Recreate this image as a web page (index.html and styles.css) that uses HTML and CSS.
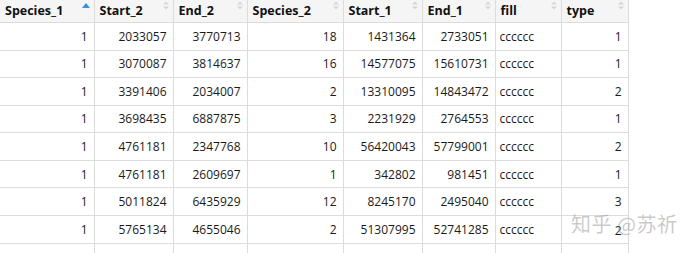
FILE: index.html
```html
<!DOCTYPE html>
<html>
<head>
<meta charset="utf-8">
<link rel="stylesheet" href="styles.css">
</head>
<body>
<div class="viewer">
<table class="grid">
<colgroup>
<col class="c1"><col class="c2"><col class="c3"><col class="c4"><col class="c5"><col class="c6"><col class="c7"><col class="c8">
</colgroup>
<thead>
<tr>
<th><span class="label">Species_1</span><span class="sort active"><svg width="8" height="5" viewBox="0 0 8 5"><path d="M0 5 L4 0 L8 5 Z" fill="#3d8fdb"/></svg></span></th>
<th><span class="label">Start_2</span><span class="sort"><svg width="6" height="9" viewBox="0 0 6 9"><path d="M0 3.5 L3 0.5 L6 3.5 Z M0 5.5 L3 8.5 L6 5.5 Z" fill="#d6d6d6"/></svg></span></th>
<th><span class="label">End_2</span><span class="sort"><svg width="6" height="9" viewBox="0 0 6 9"><path d="M0 3.5 L3 0.5 L6 3.5 Z M0 5.5 L3 8.5 L6 5.5 Z" fill="#d6d6d6"/></svg></span></th>
<th><span class="label">Species_2</span><span class="sort"><svg width="6" height="9" viewBox="0 0 6 9"><path d="M0 3.5 L3 0.5 L6 3.5 Z M0 5.5 L3 8.5 L6 5.5 Z" fill="#d6d6d6"/></svg></span></th>
<th><span class="label">Start_1</span><span class="sort"><svg width="6" height="9" viewBox="0 0 6 9"><path d="M0 3.5 L3 0.5 L6 3.5 Z M0 5.5 L3 8.5 L6 5.5 Z" fill="#d6d6d6"/></svg></span></th>
<th><span class="label">End_1</span><span class="sort"><svg width="6" height="9" viewBox="0 0 6 9"><path d="M0 3.5 L3 0.5 L6 3.5 Z M0 5.5 L3 8.5 L6 5.5 Z" fill="#d6d6d6"/></svg></span></th>
<th><span class="label">fill</span><span class="sort"><svg width="6" height="9" viewBox="0 0 6 9"><path d="M0 3.5 L3 0.5 L6 3.5 Z M0 5.5 L3 8.5 L6 5.5 Z" fill="#d6d6d6"/></svg></span></th>
<th><span class="label">type</span><span class="sort"><svg width="6" height="9" viewBox="0 0 6 9"><path d="M0 3.5 L3 0.5 L6 3.5 Z M0 5.5 L3 8.5 L6 5.5 Z" fill="#d6d6d6"/></svg></span></th>
</tr>
</thead>
<tbody>
<tr><td>1</td><td>2033057</td><td>3770713</td><td>18</td><td>1431364</td><td>2733051</td><td class="txt">cccccc</td><td>1</td></tr>
<tr><td>1</td><td>3070087</td><td>3814637</td><td>16</td><td>14577075</td><td>15610731</td><td class="txt">cccccc</td><td>1</td></tr>
<tr><td>1</td><td>3391406</td><td>2034007</td><td>2</td><td>13310095</td><td>14843472</td><td class="txt">cccccc</td><td>2</td></tr>
<tr><td>1</td><td>3698435</td><td>6887875</td><td>3</td><td>2231929</td><td>2764553</td><td class="txt">cccccc</td><td>1</td></tr>
<tr><td>1</td><td>4761181</td><td>2347768</td><td>10</td><td>56420043</td><td>57799001</td><td class="txt">cccccc</td><td>2</td></tr>
<tr><td>1</td><td>4761181</td><td>2609697</td><td>1</td><td>342802</td><td>981451</td><td class="txt">cccccc</td><td>1</td></tr>
<tr><td>1</td><td>5011824</td><td>6435929</td><td>12</td><td>8245170</td><td>2495040</td><td class="txt">cccccc</td><td>3</td></tr>
<tr><td>1</td><td>5765134</td><td>4655046</td><td>2</td><td>51307995</td><td>52741285</td><td class="txt">cccccc</td><td class="sub">2</td></tr>
<tr class="partial"><td></td><td></td><td></td><td></td><td></td><td></td><td></td><td></td></tr>
</tbody>
</table>
<div class="watermark">知乎 @苏祈</div>
</div>
</body>
</html>
```
FILE: styles.css
```css
html, body {
  margin: 0;
  padding: 0;
  background: #ffffff;
  overflow: hidden;
}
.viewer {
  position: relative;
  width: 699px;
  height: 253px;
  overflow: hidden;
  font-family: "Open Sans", "Noto Sans", sans-serif;
  color: #1a1a1a;
}
.grid {
  border-collapse: collapse;
  table-layout: fixed;
  width: 628px;
  font-size: 12px;
}
.c1 { width: 94px; }
.c2 { width: 79px; }
.c3 { width: 74px; }
.c4 { width: 96px; }
.c5 { width: 79px; }
.c6 { width: 73px; }
.c7 { width: 66px; }
.c8 { width: 67px; }
.grid th {
  position: relative;
  height: 22px;
  padding: 0 0 0 5px;
  background: #f5f5f5;
  border-right: 1px solid #dcdcdc;
  border-bottom: 1px solid #dcdcdc;
  text-align: left;
  font-weight: 700;
  font-size: 12.5px;
  color: #111;
  white-space: nowrap;
  box-sizing: border-box;
}
.grid th .label {
  display: inline-block;
  line-height: 21px;
}
.sort {
  position: absolute;
  right: 4px;
  top: 1px;
  line-height: 0;
}
.sort.active {
  top: 3px;
  right: 4px;
}
.grid td {
  height: 27.6px;
  padding: 0 6px 0 4px;
  border-right: 1px solid #dcdcdc;
  border-bottom: 1px solid #dcdcdc;
  text-align: right;
  white-space: nowrap;
  box-sizing: border-box;
}
.grid td.txt {
  text-align: left;
}
.grid td.sub {
  padding-top: 3px;
}
.grid tbody tr:first-child td {
  height: 28px;
}
.watermark {
  position: absolute;
  left: 571px;
  top: 213px;
  font-family: "Noto Sans CJK SC", sans-serif;
  font-size: 20px;
  line-height: 22px;
  color: rgba(150, 150, 150, 0.5);
  letter-spacing: 0.5px;
  white-space: nowrap;
}
```
